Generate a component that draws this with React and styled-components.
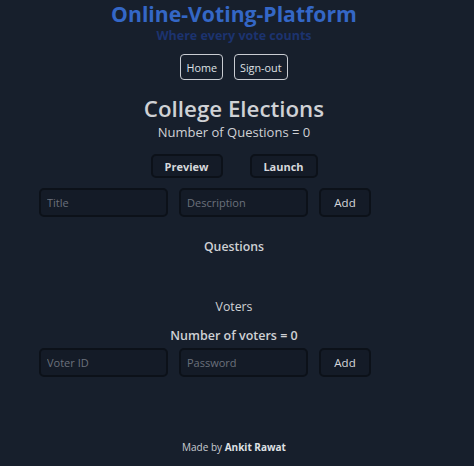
import React from "react";
import styled, { createGlobalStyle } from "styled-components";

const Global = createGlobalStyle`
  html, body { margin: 0; padding: 0; background: #171f2c; }
  body { font-family: "Open Sans", "Noto Sans", sans-serif; color: #d4d6da; }
  * { box-sizing: border-box; }
`;

const Page = styled.div`
  width: 468px;
  min-height: 466px;
  display: flex;
  flex-direction: column;
  align-items: center;
`;

const Brand = styled.h1`
  margin: 0;
  font-size: 21.2px;
  font-weight: 700;
  line-height: 28px;
  color: #3467c6;
`;

const Tagline = styled.div`
  font-size: 12.5px;
  font-weight: 700;
  line-height: 16px;
  color: #1c336f;
`;

const Nav = styled.nav`
  display: flex;
  gap: 11px;
  margin-top: 10px;
`;

const NavButton = styled.button`
  height: 26px;
  padding: 0 5px;
  border: 1px solid #c9ccd2;
  border-radius: 4px;
  background: transparent;
  color: #dfe1e5;
  font-family: inherit;
  font-size: 10.8px;
`;

const Heading = styled.h2`
  margin: 15px 0 0;
  font-size: 22.3px;
  font-weight: 600;
  line-height: 28px;
  color: #cfd1d5;
`;

const Count = styled.div`
  font-size: ${(p) => p.$size}px;
  line-height: 18px;
  color: #cfd1d5;
  font-weight: ${(p) => (p.$bold ? 600 : 400)};
  margin-top: ${(p) => p.$mt || 0}px;
`;

const Actions = styled.div`
  display: flex;
  gap: 27px;
  margin-top: 13px;
`;

const ActionButton = styled.button`
  width: ${(p) => p.$w}px;
  height: 24px;
  border: 2px solid #0c1119;
  border-radius: 5px;
  background: #141b27;
  color: #d6d8dc;
  font-family: inherit;
  font-size: 11px;
  font-weight: 700;
`;

const FormRow = styled.form`
  align-self: flex-start;
  margin-left: 39px;
  margin-top: ${(p) => p.$mt}px;
  display: flex;
  gap: 11px;
`;

const Field = styled.input`
  width: 129px;
  height: 29px;
  padding: 0 6px;
  border: 2px solid #0c1119;
  border-radius: 5px;
  background: #141b27;
  color: #d6d8dc;
  font-family: inherit;
  font-size: 11px;
  outline: none;
  &::placeholder { color: #6b717c; }
`;

const AddButton = styled.button`
  width: 52px;
  height: 29px;
  border: 2px solid #0c1119;
  border-radius: 5px;
  background: #141b27;
  color: #d6d8dc;
  font-family: inherit;
  font-size: 11.5px;
`;

const SectionTitle = styled.h3`
  margin: ${(p) => p.$mt}px 0 0;
  font-size: 12.3px;
  line-height: 18px;
  font-weight: ${(p) => (p.$bold ? 600 : 400)};
  color: #cfd1d5;
`;

const Footer = styled.footer`
  margin-top: 63px;
  font-size: 10px;
  line-height: 14px;
  color: #c9ccd2;
  b { font-weight: 700; color: #dfe1e5; }
`;

export default function App() {
  return (
    <>
      <Global />
      <Page>
        <Brand>Online-Voting-Platform</Brand>
        <Tagline>Where every vote counts</Tagline>
        <Nav>
          <NavButton>Home</NavButton>
          <NavButton>Sign-out</NavButton>
        </Nav>
        <Heading>College Elections</Heading>
        <Count $size={13}>Number of Questions = 0</Count>
        <Actions>
          <ActionButton $w={72}>Preview</ActionButton>
          <ActionButton $w={68}>Launch</ActionButton>
        </Actions>
        <FormRow $mt={10} onSubmit={(e) => e.preventDefault()}>
          <Field placeholder="Title" />
          <Field placeholder="Description" />
          <AddButton>Add</AddButton>
        </FormRow>
        <SectionTitle $mt={21} $bold>Questions</SectionTitle>
        <SectionTitle $mt={42}>Voters</SectionTitle>
        <Count $bold $size={12.5} $mt={11}>Number of voters = 0</Count>
        <FormRow $mt={3} onSubmit={(e) => e.preventDefault()}>
          <Field placeholder="Voter ID" />
          <Field placeholder="Password" type="password" />
          <AddButton>Add</AddButton>
        </FormRow>
        <Footer>
          Made by <b>Ankit Rawat</b>
        </Footer>
      </Page>
    </>
  );
}
